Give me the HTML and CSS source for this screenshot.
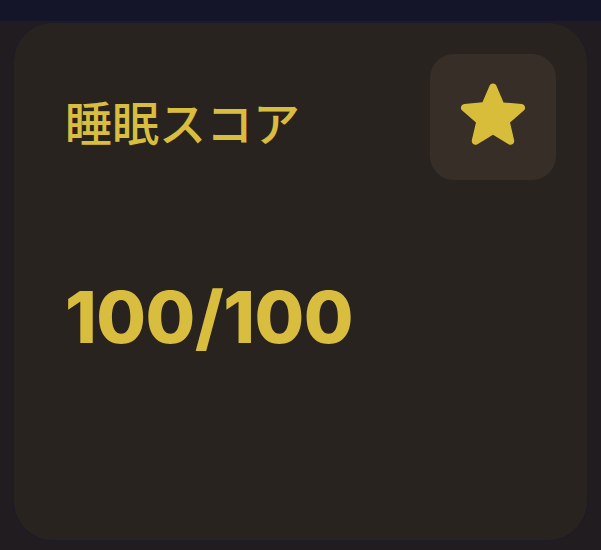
FILE: index.html
```html
<!DOCTYPE html>
<html lang="ja">
<head>
<meta charset="utf-8">
<link rel="stylesheet" href="styles.css">
</head>
<body>
<div class="card">
  <div class="head">
    <div class="title">睡眠スコア</div>
    <div class="icon-box">
      <svg class="star" viewBox="0 0 24 24" width="90" height="90" aria-hidden="true">
        <path d="M12 17.27l4.15 2.51c.76.46 1.69-.22 1.49-1.08l-1.1-4.72 3.67-3.18c.67-.58.31-1.68-.57-1.75l-4.83-.41-1.89-4.46c-.34-.81-1.5-.81-1.84 0L9.19 8.63l-4.83.41c-.88.07-1.24 1.17-.57 1.750l3.67 3.18-1.1 4.72c-.2.86.73 1.54 1.49 1.08L12 17.27z" fill="currentColor"/>
      </svg>
    </div>
  </div>
  <div class="value">100/100</div>
</div>
</body>
</html>
```
FILE: styles.css
```css
html, body {
  margin: 0;
  padding: 0;
}
body {
  width: 601px;
  height: 550px;
  box-sizing: border-box;
  padding: 22px 13px 0 13px;
  background: linear-gradient(to bottom, #15152a 0, #15152a 21px, #201c1f 21px);
  overflow: hidden;
}
.card {
  width: 575px;
  height: 519px;
  box-sizing: border-box;
  border-radius: 40px;
  background: #29231f;
  border: 1px solid #1c1b2c;
  padding: 31px 31px 0 51px;
}
.head {
  display: flex;
  justify-content: space-between;
  align-items: flex-start;
}
.title {
  margin-top: 43px;
  font-family: "Noto Sans CJK JP", sans-serif;
  font-size: 47px;
  line-height: 1;
  color: #d9bd3e;
  font-weight: 500;
}
.icon-box {
  width: 126px;
  height: 126px;
  border-radius: 24px;
  background: #372e28;
  display: flex;
  align-items: center;
  justify-content: center;
  color: #d7bd3a;
}
.star {
  margin-bottom: 4px;
}
.value {
  margin-top: 101px;
  font-family: Inter, sans-serif;
  font-weight: 800;
  font-size: 72px;
  letter-spacing: -0.5px;
  line-height: 1;
  color: #d9bd3e;
}
```
